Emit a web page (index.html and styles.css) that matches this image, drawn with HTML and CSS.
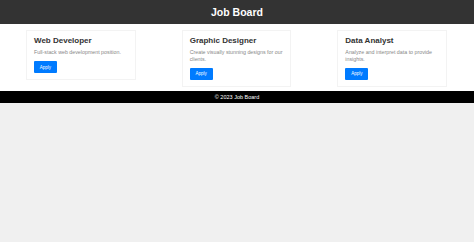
FILE: index.html
```html
<!DOCTYPE html>
<html lang="en">
<head>
<meta charset="UTF-8">
<meta name="viewport" content="width=device-width, initial-scale=1.0">
<title>Job Board</title>
<link rel="stylesheet" href="styles.css">
</head>
<body>

<header class="top-bar">
    <h1>Job Board</h1>
</header>

<main class="job-list">
    <div class="job-card">
        <h2>Web Developer</h2>
        <p>Full-stack web development position.</p>
        <button class="apply-btn">Apply</button>
    </div>
    <div class="job-card">
        <h2>Graphic Designer</h2>
        <p>Create visually stunning designs for our clients.</p>
        <button class="apply-btn">Apply</button>
    </div>
    <div class="job-card">
        <h2>Data Analyst</h2>
        <p>Analyze and interpret data to provide insights.</p>
        <button class="apply-btn">Apply</button>
    </div>
</main>

<footer class="bottom-bar">
    <p>&copy; 2023 Job Board</p>
</footer>

</body>
</html>
```

FILE: styles.css
```css
/* Estilos */
body {
    margin: 0;
    font-family: "Liberation Sans", Arial, sans-serif;
    background-color: #f0f0f0;
}
.top-bar {
    background-color: #333;
    color: white;
    height: 24px;
    display: flex;
    align-items: center;
    justify-content: center;
}
.top-bar h1 {
    margin: 0;
    font-size: 10.5px;
}
.job-list {
    background-color: white;
    display: flex;
    align-items: flex-start;
    gap: 46px;
    padding: 6px 27px 4px 26px;
}
.job-card {
    flex: 1;
    border: 1px solid #f3f3f3;
    padding: 5px 7px 6px 7px;
}
.job-card h2 {
    margin: 0 0 4px 0;
    font-size: 8px;
    color: #333;
}
.job-card p {
    margin: 0 0 5.5px 0;
    font-size: 5.3px;
    line-height: 6.5px;
    color: #888;
}
.apply-btn {
    display: block;
    background-color: #007bff;
    color: white;
    border: none;
    border-radius: 1px;
    width: 23px;
    height: 12px;
    padding: 0;
    font-family: "Liberation Sans", Arial, sans-serif;
    font-size: 4.5px;
    cursor: pointer;
}
.bottom-bar {
    background-color: black;
    color: white;
    height: 12px;
    display: flex;
    align-items: center;
    justify-content: center;
}
.bottom-bar p {
    margin: 0;
    font-size: 5.5px;
}
```
